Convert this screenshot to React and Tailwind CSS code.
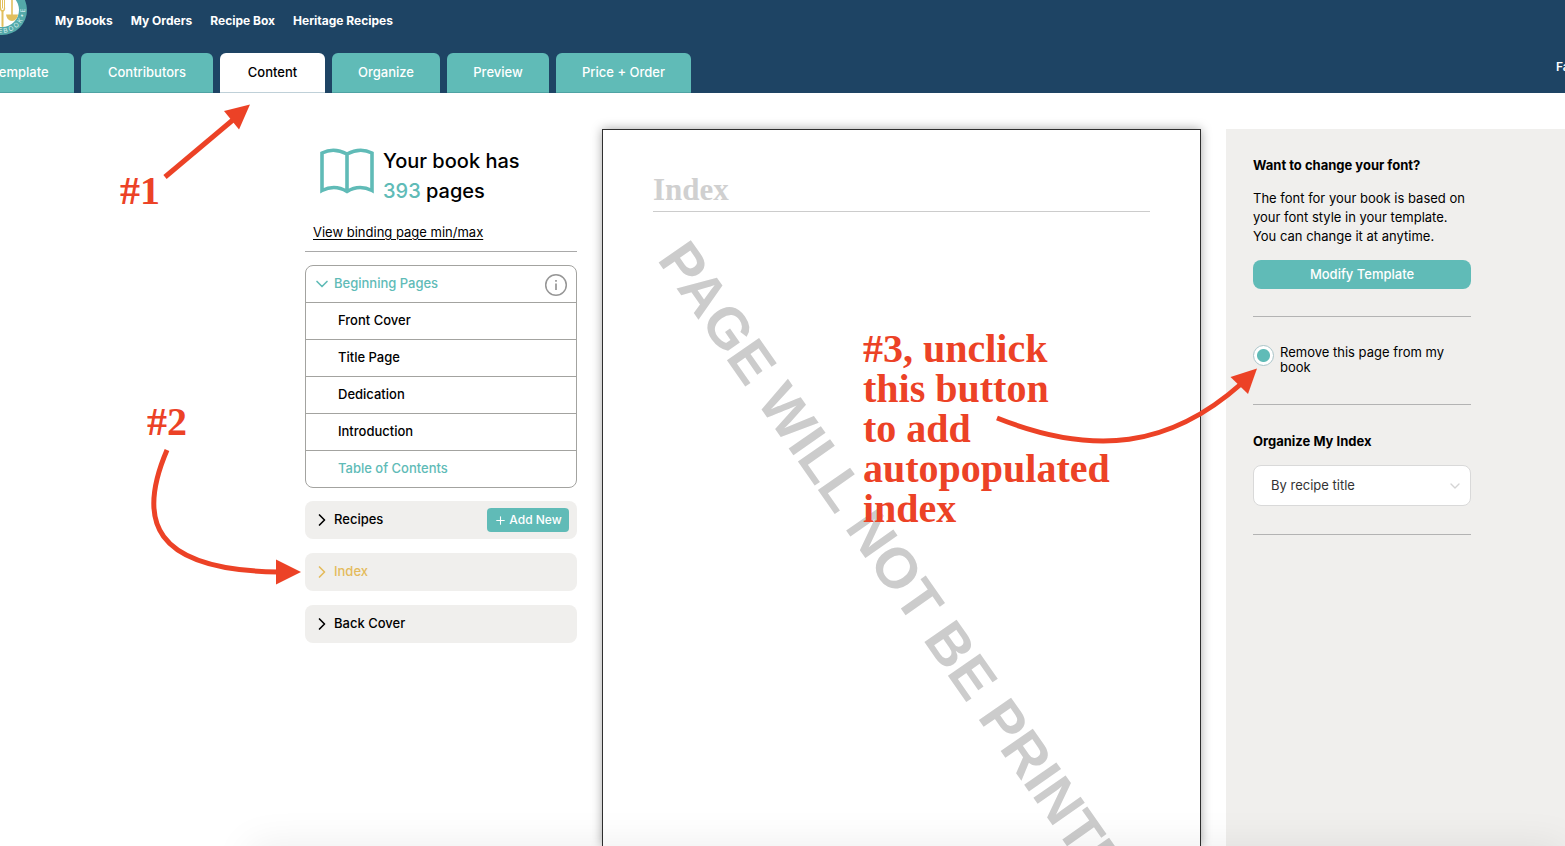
import React from "react";
import { ChevronDown, ChevronRight, Plus } from "lucide-react";

const tabs = [
  { label: "Template", width: "w-[108px]" },
  { label: "Contributors", width: "w-[132px]" },
  { label: "Content", width: "w-[105px]", active: true },
  { label: "Organize", width: "w-[108px]" },
  { label: "Preview", width: "w-[102px]" },
  { label: "Price + Order", width: "w-[135px]" },
];

const beginningPages = ["Front Cover", "Title Page", "Dedication", "Introduction", "Table of Contents"];

function Logo() {
  return (
    <svg width="28" height="36" viewBox="0 0 28 36" aria-label="Family cookbook logo">
      <defs>
        <path id="logo-ring" d="M-21 10 A23 23 0 0 0 25 10 A23 23 0 0 0 2 -13" fill="none" />
      </defs>
      <circle cx="2" cy="10" r="25" fill="#54a9a9" />
      <circle cx="2" cy="10" r="17" fill="#fff" />
      <g fill="none" stroke="#e2bf5d" strokeLinecap="round">
        <path d="M0.5 0V8M2.5 0V8M4.5 0V8" strokeWidth="1" />
        <path d="M0.5 8Q0.5 11 2.5 11Q4.5 11 4.5 8" strokeWidth="1.4" />
        <path d="M2.5 11V26" strokeWidth="2" />
        <path d="M12 0V15" strokeWidth="1.6" />
      </g>
      <path d="M6 14.500H18Q17 21 12 21Q7 21 6 14.500Z" fill="#e2bf5d" />
      <text fill="#d5eeee" fontFamily="Inter, sans-serif" fontSize="6.5">
        <textPath href="#logo-ring" startOffset="32">E B O O K • E</textPath>
      </text>
    </svg>
  );
}

function Header() {
  return (
    <header className="flex flex-col bg-[#1e4464] text-white">
      <div className="flex h-[53px] items-start">
        <a href="#home" className="block w-[55px] shrink-0">
          <Logo />
        </a>
        <nav className="flex gap-[18px] pt-3 text-xs leading-[18px] font-bold">
          <a href="#books">My Books</a>
          <a href="#orders">My Orders</a>
          <a href="#box">Recipe Box</a>
          <a href="#heritage">Heritage Recipes</a>
        </nav>
      </div>
      <div className="flex h-10 justify-between">
        <nav className="-ml-[34px] flex gap-[7px] text-[13px] font-medium">
          {tabs.map((t) => (
            <a
              key={t.label}
              href={"#" + t.label}
              className={
                "flex shrink-0 items-center justify-center rounded-t-md border-b " +
                t.width +
                (t.active ? " border-[#bfd0d8] bg-white text-black" : " border-[#4fa3a4] bg-[#60bbb7] text-white")
              }
            >
              {t.label}
            </a>
          ))}
        </nav>
        <a href="#family" className="w-[9px] overflow-hidden pt-1 text-xs leading-5 font-semibold whitespace-nowrap">
          Family
        </a>
      </div>
    </header>
  );
}

function Section({ title, tone, children }) {
  return (
    <div className="flex h-[38px] items-center justify-between rounded-lg bg-[#f0efed] pr-2 pl-[7px]">
      <button type="button" className={"flex items-center gap-[2px] text-[13px] font-medium " + tone}>
        <ChevronRight size={20} strokeWidth={2} />
        {title}
      </button>
      {children}
    </div>
  );
}

function Sidebar() {
  return (
    <div className="w-[272px] shrink-0">
      <div className="flex gap-2 pt-[17px] pl-[14px]">
        <svg width="56" height="48" viewBox="0 0 56 48" className="mt-[2px]" fill="none" stroke="#60bbb7" strokeWidth="3.6">
          <path d="M28 6Q15 -1 3 5V42.500Q16 36 28 43.500Q40 36 53 42.500V5Q41 -1 28 6V44" />
        </svg>
        <p className="text-xl leading-[30px] font-medium">
          Your book has
          <br />
          <span className="text-[#60bbb7]">393</span> pages
        </p>
      </div>
      <div className="border-b border-[#a9a9a9] px-2 pt-4 pb-[9px] text-[13px] leading-5">
        <a href="#binding" className="underline underline-offset-2">
          View binding page min/max
        </a>
      </div>
      <div className="mt-[13px] rounded-lg border border-[#a3a3a0] text-[13px] font-medium">
        <div className="flex h-9 items-center justify-between pr-2 pl-[6px] text-[#60bbb7]">
          <button type="button" className="flex items-center gap-[2px]">
            <ChevronDown size={20} strokeWidth={2} />
            Beginning Pages
          </button>
          <button type="button" aria-label="About beginning pages">
            <svg width="24" height="24" viewBox="0 0 24 24" fill="none" stroke="#969696" className="mt-px">
              <circle cx="12" cy="12" r="10.300" strokeWidth="1.500" />
              <path d="M12 10.500V17M12 7V8.800" strokeWidth="1.700" />
            </svg>
          </button>
        </div>
        <ul>
          {beginningPages.map((p, i) => (
            <li key={p} className="flex h-[37px] items-center border-t border-[#a3a3a0] pl-8">
              <a href={"#page" + i} className={i === 4 ? "text-[#60bbb7]" : "text-black"}>
                {p}
              </a>
            </li>
          ))}
        </ul>
      </div>
      <div className="mt-[13px] flex flex-col gap-[14px]">
        <Section title="Recipes" tone="text-black">
          <button
            type="button"
            className="flex h-6 w-[82px] items-center justify-center gap-[2px] rounded bg-[#60bbb7] text-xs font-medium text-white"
          >
            <Plus size={13} strokeWidth={2} />
            Add New
          </button>
        </Section>
        <Section title="Index" tone="text-[#e4bb5c]" />
        <Section title="Back Cover" tone="text-black" />
      </div>
    </div>
  );
}

function BookPage() {
  return (
    <section className="relative w-[599px] shrink-0 overflow-hidden border border-b-0 border-[#2f2f2f] bg-white px-[50px] pt-[42px] shadow-[0_0_10px_rgba(0,0,0,0.35)]">
      <h1 className="border-b border-[#cccccc] pb-[3px] font-['Liberation_Serif',serif] text-[31px] leading-9 font-bold text-[#d0d0d0]">
        Index
      </h1>
      <p className="absolute top-[106px] left-[87px] origin-top-left rotate-[55deg] font-['Liberation_Sans',sans-serif] text-[57px] leading-[43px] font-bold whitespace-nowrap text-[#cccccc]">
        PAGE WILL NOT BE PRINTED
      </p>
    </section>
  );
}

function Settings() {
  return (
    <aside className="flex-1 bg-[#f0efed] pt-[26px] pl-[27px] text-[13px]">
      <div className="w-[218px]">
        <h2 className="leading-5 font-bold">Want to change your font?</h2>
        <p className="mt-[14px] leading-[19px] whitespace-nowrap">
          The font for your book is based on
          <br />
          your font style in your template.
          <br />
          You can change it at anytime.
        </p>
        <button type="button" className="mt-[14px] h-[29px] w-full rounded-lg bg-[#60bbb7] font-medium text-white">
          Modify Template
        </button>
        <hr className="mt-[27px] border-[#b3b3b3]" />
        <div className="mt-7 flex gap-[6px]">
          <input
            id="remove-page"
            type="radio"
            defaultChecked
            className="size-[21px] shrink-0 appearance-none rounded-full border border-[#a9c4c8] bg-white checked:bg-[radial-gradient(circle,#60bbb7_6px,#fff_7px)]"
          />
          <label htmlFor="remove-page" className="leading-[15px]">
            Remove this page from my book
          </label>
        </div>
        <hr className="mt-[29px] border-[#b3b3b3]" />
        <label htmlFor="organize" className="mt-[26px] block leading-5 font-bold">
          Organize My Index
        </label>
        <div className="relative mt-[14px]">
          <select
            id="organize"
            className="h-[41px] w-full appearance-none rounded-lg border border-[#d9d9d9] bg-white pl-[17px] text-[#333]"
          >
            <option>By recipe title</option>
          </select>
          <ChevronDown
            size={16}
            strokeWidth={2}
            className="pointer-events-none absolute top-[13px] right-2 text-[#d4d4d4]"
          />
        </div>
        <hr className="mt-7 border-[#b3b3b3]" />
      </div>
    </aside>
  );
}

function Annotations() {
  return (
    <div className="pointer-events-none absolute top-0 left-0 font-['Liberation_Serif',serif] text-[40px] leading-10 font-bold whitespace-nowrap text-[#ec4226]">
      <svg width="1300" height="620" viewBox="0 0 1300 620" fill="none" stroke="#ec4226" strokeWidth="5">
        <path d="M165 177L234 119" />
        <path d="M250 104.500L224 111L239 129.500Z" fill="#ec4226" stroke="none" />
        <path d="M167 450C137 520 151 570 278 572" />
        <path d="M301 572L276 559.500V584.500Z" fill="#ec4226" stroke="none" />
        <path d="M997 418C1095 457 1170 447 1241 384" />
        <path d="M1257 368.500L1230.500 377L1248 394Z" fill="#ec4226" stroke="none" />
      </svg>
      <p className="absolute top-[171px] left-[120px]">#1</p>
      <p className="absolute top-[402px] left-[147px]">#2</p>
      <p className="absolute top-[329px] left-[863px]">
        #3, unclick
        <br />
        this button
        <br />
        to add
        <br />
        autopopulated
        <br />
        index
      </p>
    </div>
  );
}

export default function App() {
  return (
    <div className="relative flex min-h-screen flex-col overflow-hidden bg-white font-['Inter',sans-serif] text-black">
      <Header />
      <main className="flex flex-1 gap-[25px] pt-9 pl-[305px]">
        <Sidebar />
        <BookPage />
        <Settings />
      </main>
      <div className="pointer-events-none absolute right-0 -bottom-10 left-[250px] h-10 shadow-[0_0_40px_rgba(0,0,0,0.08)]" />
      <Annotations />
    </div>
  );
}
